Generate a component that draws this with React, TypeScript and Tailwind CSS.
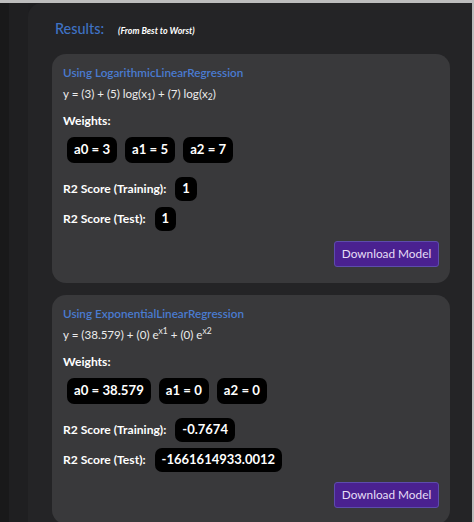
import React from "react";

const font = { fontFamily: "Lato, 'Noto Sans', 'Liberation Sans', sans-serif" };

function Chip({ children, className = "" }: { children: React.ReactNode; className?: string }) {
  return (
    <span className={`inline-flex items-center justify-center bg-black text-white font-bold rounded-[7px] ${className}`}>
      {children}
    </span>
  );
}

function Card({
  title,
  equation,
  weights,
  train,
  test,
}: {
  title: string;
  equation: React.ReactNode;
  weights: string[];
  train: string;
  test: string;
}) {
  return (
    <div className="bg-[#39393b] rounded-[14px] pt-[10px] pb-[16px] pl-[11px] pr-[11px]">
      <div className="text-[11.7px] leading-[16px] font-semibold text-[#4a7bd0]">{title}</div>
      <div className="mt-[6px] text-[11.6px] leading-[16px] text-[#ececec]">{equation}</div>
      <div className="mt-[11px] text-[12.1px] leading-[16px] font-bold text-white">Weights:</div>
      <div className="mt-[4px] flex flex-wrap">
        {weights.map((w) => (
          <Chip key={w} className="m-[4px] h-[26px] px-[7px] text-[13.2px]">
            {w}
          </Chip>
        ))}
      </div>
      <div className="mt-[10px] flex items-center h-[24px]">
        <span className="text-[12.1px] font-bold text-white">R2 Score (Training):</span>
        <Chip className="ml-[9px] h-[24px] px-[7px] text-[13px]">{train}</Chip>
      </div>
      <div className="mt-[6px] flex items-center h-[24px]">
        <span className="text-[12.1px] font-bold text-white">R2 Score (Test):</span>
        <Chip className="ml-[9px] h-[24px] px-[7px] text-[13px]">{test}</Chip>
      </div>
      <div className="mt-[10px] flex justify-end">
        <button className="h-[26px] w-[105px] bg-[#4a2190] border border-[#5d4cac] rounded-[3px] text-[11.8px] text-[#e6def6]">
          Download Model
        </button>
      </div>
    </div>
  );
}

export default function App() {
  return (
    <div style={font} className="w-[474px] h-[522px] overflow-hidden bg-[#1e1e20] flex flex-col">
      <div className="h-[3px] bg-[#bdbdbd] shrink-0" />
      <div className="flex flex-1 min-h-0">
        <div className="w-[9px] bg-[#19191a] shrink-0" />
        <div className="w-[19px] bg-[#1f1f21] shrink-0" />
        <div className="flex-1 bg-[#242426] rounded-tl-[14px] pl-[24px] pr-[22px] pt-[15px] min-w-0">
          <div className="flex items-baseline pl-[3px]">
            <span className="text-[14.4px] font-medium text-[#3f72c4]">Results:</span>
            <span className="ml-[14px] text-[8.9px] italic font-bold text-white">(From Best to Worst)</span>
          </div>
          <div className="mt-[14px] flex flex-col gap-[12px]">
            <Card
              title="Using LogarithmicLinearRegression"
              equation={
                <>
                  y = (3) + (5) log(x<sub className="text-[8.5px]">1</sub>) + (7) log(x<sub className="text-[8.5px]">2</sub>)
                </>
              }
              weights={["a0 = 3", "a1 = 5", "a2 = 7"]}
              train="1"
              test="1"
            />
            <Card
              title="Using ExponentialLinearRegression"
              equation={
                <>
                  y = (38.579) + (0) e<sup className="text-[8.5px]">x1</sup> + (0) e<sup className="text-[8.5px]">x2</sup>
                </>
              }
              weights={["a0 = 38.579", "a1 = 0", "a2 = 0"]}
              train="-0.7674"
              test="-1661614933.0012"
            />
          </div>
        </div>
        <div className="w-[2px] bg-[#bdbdbd] shrink-0" />
      </div>
    </div>
  );
}
